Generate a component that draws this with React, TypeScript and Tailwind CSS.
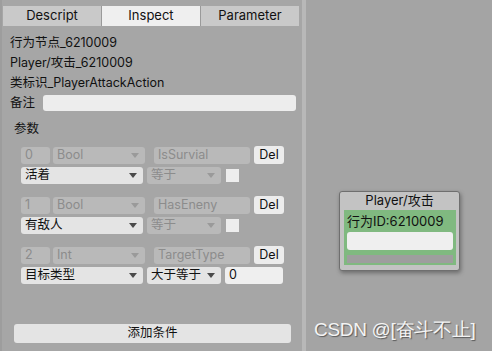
import React from 'react';

const font = { fontFamily: 'Inter, "Noto Sans CJK SC", sans-serif' };

const Arrow = ({ dim }: { dim?: boolean }) => (
  <svg width="8" height="5" viewBox="0 0 8 5" className="shrink-0">
    <path d="M0 0 L8 0 L4 5 Z" fill={dim ? '#9a9a9a' : '#4a4a4a'} />
  </svg>
);

const Dropdown = ({ label, width, dim }: { label: string; width: string; dim?: boolean }) => (
  <div
    className={`flex h-[17px] items-center justify-between rounded-[3px] pl-[4px] pr-[6px] text-[12.5px] ${width} ${
      dim ? 'bg-[#b9b9b9] text-[#8c8c8c]' : 'bg-[#e4e4e4] text-[#111]'
    }`}
  >
    <span className="leading-none">{label}</span>
    <Arrow dim={dim} />
  </div>
);

const Field = ({ text, width, dim }: { text: string; width: string; dim?: boolean }) => (
  <div
    className={`flex h-[17px] items-center rounded-[3px] px-[4px] text-[12.5px] leading-none ${width} ${
      dim ? 'bg-[#b9b9b9] text-[#8c8c8c]' : 'bg-[#efefef] text-[#111]'
    }`}
  >
    {text}
  </div>
);

type Param = { idx: string; type: string; name: string; label: string; op: string; opDim: boolean; value?: string };

const params: Param[] = [
  { idx: '0', type: 'Bool', name: 'IsSurvial', label: '活着', op: '等于', opDim: true },
  { idx: '1', type: 'Bool', name: 'HasEneny', label: '有敌人', op: '等于', opDim: true },
  { idx: '2', type: 'Int', name: 'TargetType', label: '目标类型', op: '大于等于', opDim: false, value: '0' },
];

const ParamBlock = ({ p }: { p: Param }) => (
  <div className="flex flex-col gap-[3px]">
    <div className="flex items-center gap-[3px]">
      <Field text={p.idx} width="w-[29px]" dim />
      <Dropdown label={p.type} width="w-[92px] mr-[6px]" dim />
      <Field text={p.name} width="w-[96px]" dim />
      <div className="ml-[1px] flex h-[18px] w-[30px] items-center justify-center rounded-[3px] bg-[#ececec] text-[12.5px] text-[#111]">
        Del
      </div>
    </div>
    <div className="flex items-center gap-[4px]">
      <Dropdown label={p.label} width="w-[122px]" />
      <Dropdown label={p.op} width="w-[74px]" dim={p.opDim} />
      {p.value !== undefined ? (
        <Field text={p.value} width="w-[58px]" />
      ) : (
        <div className="ml-[1px] h-[13px] w-[13px] bg-[#ededed]" />
      )}
    </div>
  </div>
);

export default function App() {
  return (
    <div className="flex h-[351px] w-[492px] overflow-hidden bg-[#a5a5a5] text-[#111]" style={font}>
      {/* inspector panel */}
      <div className="flex w-[302px] shrink-0 flex-col border-l-[2px] border-[#9d9d9d] bg-[#a6a6a6]">
        <div className="ml-[1px] mt-[6px] flex h-[20px] text-[13px]">
          <div className="flex w-[99px] items-center justify-center border-r border-[#9a9a9a] bg-[#c9c9c9]">Descript</div>
          <div className="flex w-[98px] items-center justify-center bg-[#efefef]">Inspect</div>
          <div className="flex w-[99px] items-center justify-center border-l border-[#9a9a9a] bg-[#c9c9c9]">Parameter</div>
        </div>

        <div className="flex flex-col pl-[8px] pr-[6px] pt-[7px] text-[12.5px]">
          <div className="h-[20px] leading-[20px]">行为节点_6210009</div>
          <div className="h-[20px] leading-[20px]">Player/攻击_6210009</div>
          <div className="h-[20px] leading-[20px]">类标识_PlayerAttackAction</div>
          <div className="flex h-[20px] items-center gap-[8px]">
            <span>备注</span>
            <div className="h-[16px] flex-1 rounded-[3px] bg-[#ededed]" />
          </div>
          <div className="mt-[6px] h-[20px] pl-[4px] leading-[20px]">参数</div>
        </div>

        <div className="mt-[7px] flex flex-col gap-[12px] pl-[19px]">
          {params.map((p) => (
            <ParamBlock key={p.idx} p={p} />
          ))}
        </div>

        <div className="ml-[12px] mt-[40px] flex h-[19px] w-[277px] items-center justify-center rounded-[3px] bg-[#e4e4e4] text-[12.5px]">
          添加条件
        </div>
      </div>

      {/* splitter */}
      <div className="w-[4px] shrink-0 bg-[#b8b8b8]" />

      {/* graph canvas */}
      <div className="relative flex-1 bg-[#a4a4a4]">
        <div className="absolute left-[33px] top-[191px] flex h-[80px] w-[121px] flex-col rounded-[3px] border border-[#6f6f6f] bg-[#c3c3c3] shadow-[1px_2px_4px_rgba(0,0,0,0.35)]">
          <div className="flex h-[18px] items-center justify-center text-[13px]">Player/攻击</div>
          <div className="ml-[4px] mr-[3px] flex h-[55px] flex-col bg-[#80b980] px-[3px]">
            <div className="h-[22px] text-[13px] leading-[22px]">行为ID:6210009</div>
            <div className="h-[18px] shrink-0 rounded-[3px] bg-[#efefef]" />
            <div className="mt-[5px] h-[8px] shrink-0 bg-[#9e9e9e]" />
          </div>
        </div>
        <div
          className="absolute left-[8px] top-[316px] font-['Liberation_Sans'] text-[19px] tracking-[-0.3px] text-[#f4f4f4]"
          style={{ textShadow: '1px 1px 1px rgba(0,0,0,0.45)' }}
        >
          CSDN @[奋斗不止]
        </div>
      </div>
    </div>
  );
}
